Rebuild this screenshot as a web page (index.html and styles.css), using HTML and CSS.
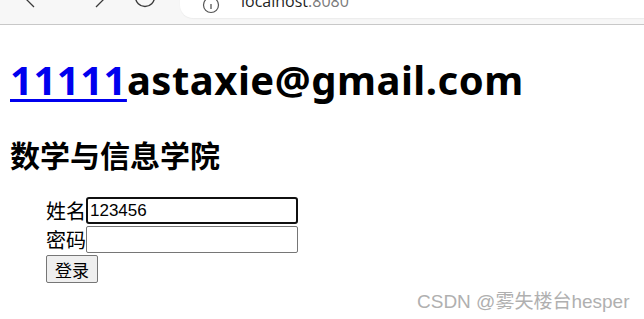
FILE: index.html
```html
<!DOCTYPE html>
<html>
<head>
<meta charset="utf-8">
<link rel="stylesheet" href="styles.css">
</head>
<body>
<div class="chrome">
  <div class="nav">
    <svg class="ic back" width="20" height="24" viewBox="0 0 20 24"><path d="M14 2 L5 11 L14 20" fill="none" stroke="#3a3a3a" stroke-width="1.3"/></svg>
    <svg class="ic fwd" width="20" height="24" viewBox="0 0 20 24"><path d="M6 2 L15 11 L6 20" fill="none" stroke="#3a3a3a" stroke-width="1.3"/></svg>
    <svg class="ic reload" width="24" height="24" viewBox="0 0 24 24"><circle cx="12" cy="12" r="9.5" fill="none" stroke="#3a3a3a" stroke-width="1.4"/></svg>
  </div>
  <div class="address">
    <svg class="info" width="18" height="18" viewBox="0 0 18 18"><circle cx="9" cy="9" r="7.5" fill="none" stroke="#555" stroke-width="1.2"/><path d="M9 8 V13" stroke="#555" stroke-width="1.3"/></svg>
    <span class="host">localhost<span class="port">:8080</span></span>
  </div>
</div>
<div class="page">
  <h1 class="title"><a href="#" class="link">11111</a>astaxie@gmail.com</h1>
  <h2 class="school">数学与信息学院</h2>
  <form class="login">
    <div class="row"><label class="lbl">姓名</label><input class="field focused" type="text" value="123456"></div>
    <div class="row"><label class="lbl">密码</label><input class="field" type="password"></div>
    <div class="row"><button class="btn" type="button">登录</button></div>
  </form>
</div>
<div class="watermark">CSDN @雾失楼台hesper</div>
</body>
</html>
```
FILE: styles.css
```css
html, body { margin: 0; padding: 0; background: #fff; }
body { width: 644px; height: 319px; overflow: hidden; position: relative; }
.chrome {
  height: 24px;
  background: #f7f7f7;
  border-bottom: 1px solid #c8c8c8;
  display: flex;
  align-items: flex-start;
  overflow: hidden;
}
.nav { width: 180px; flex: none; display: flex; align-items: flex-start; margin-top: -13px; height: 37px; }
.ic { display: block; flex: none; }
.back { margin-left: 20px; }
.fwd { margin-left: 50px; }
.reload { margin-left: 23px; margin-top: -2px; }
.address {
  margin-top: -10px;
  height: 28px;
  flex: 1;
  background: #fff;
  border-radius: 0 0 0 13px;
  box-shadow: 0 1px 1px #ececec;
  display: flex;
  align-items: center;
}
.info { margin-left: 22px; margin-top: 2px; flex: none; }
.host {
  margin-left: 21px;
  font-family: "Open Sans", "Noto Sans", sans-serif;
  font-size: 16px;
  color: #1f1f1f;
  margin-top: -6px;
}
.port { color: #7a7a7a; }
.page { padding: 0 10px; }
.title {
  margin: 31px 0 0 0;
  font-family: "Noto Sans", sans-serif;
  font-weight: bold;
  font-size: 40px;
  line-height: 48px;
  color: #000;
  letter-spacing: 0.5px;
}
.link { color: #0000ee; text-decoration: underline; text-decoration-thickness: 3px; text-underline-offset: 4px; }
.school {
  margin: 32px 0 0 0;
  font-family: "Noto Sans CJK SC", sans-serif;
  font-weight: bold;
  font-size: 30px;
  line-height: 36px;
}
.login { margin-top: 25px; padding-left: 36px; display: flex; flex-direction: column; }
.row { display: flex; align-items: center; }
.row + .row { margin-top: 2px; }
.lbl {
  font-family: "Noto Sans CJK SC", sans-serif;
  font-size: 20px;
  line-height: 27px;
  color: #000;
}
.field {
  box-sizing: border-box;
  width: 212px;
  height: 27px;
  margin: 0;
  padding: 1px 3px;
  border: 1px solid #767676;
  border-radius: 2px;
  font-family: "Liberation Sans", Arial, sans-serif;
  font-size: 17px;
  color: #000;
  background: #fff;
  outline: none;
}
.field.focused { border: 2px solid #101010; border-radius: 3px; padding: 0 2px; }
.btn {
  box-sizing: border-box;
  width: 52px;
  height: 28px;
  margin: 0;
  padding: 0;
  border: 1px solid #767676;
  border-radius: 2px;
  background: #efefef;
  font-family: "Noto Sans CJK SC", sans-serif;
  font-size: 17px;
  color: #000;
}
.watermark {
  position: absolute;
  left: 417px;
  top: 286px;
  font-family: "Liberation Sans", "Noto Sans CJK SC", sans-serif;
  font-size: 19px;
  color: #b0b0b0;
}
```
